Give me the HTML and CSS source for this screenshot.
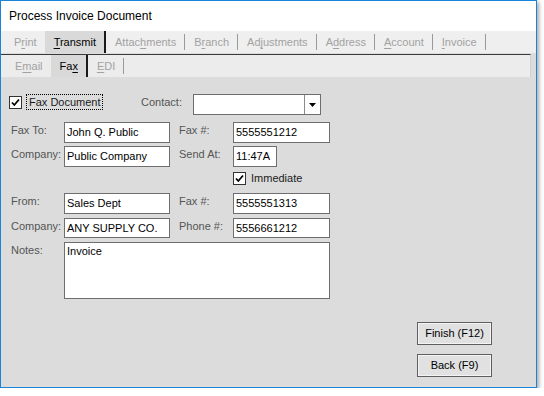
FILE: index.html
```html
<!DOCTYPE html>
<html>
<head>
<meta charset="utf-8">
<link rel="stylesheet" href="styles.css">
</head>
<body>
<div class="window">
  <div class="titlebar">Process Invoice Document</div>
  <div class="tabs tabs-main">
    <span class="tab first">P<u>r</u>int</span>
    <span class="tab active"><u>T</u>ransmit</span><span class="sep dark"></span>
    <span class="tab">Attac<u>h</u>ments</span><span class="sep"></span>
    <span class="tab">B<u>r</u>anch</span><span class="sep"></span>
    <span class="tab">Ad<u>j</u>ustments</span><span class="sep"></span>
    <span class="tab">A<u>d</u>dress</span><span class="sep"></span>
    <span class="tab"><u>A</u>ccount</span><span class="sep"></span>
    <span class="tab"><u>I</u>nvoice</span><span class="sep"></span>
  </div>
  <div class="tabs tabs-sub">
    <span class="tab first">E<u>m</u>ail</span>
    <span class="tab active">Fa<u>x</u></span><span class="sep dark"></span>
    <span class="tab"><u>E</u>DI</span><span class="sep"></span>
  </div>
  <div class="panel">
    <div class="row row1">
      <span class="check"><svg width="11" height="11" viewBox="0 0 11 11"><path d="M2 5.5 L4.3 8 L9 2.5" fill="none" stroke="#000" stroke-width="1.8"/></svg></span>
      <span class="focus-label">Fax Document</span>
      <span class="lbl contact">Contact:</span>
      <span class="combo"><span class="combo-btn"><svg width="7" height="4" viewBox="0 0 7 4"><path d="M0 0 H7 L3.5 4 Z" fill="#000"/></svg></span></span>
    </div>
    <div class="row row2">
      <span class="lbl c1">Fax To:</span>
      <span class="input w1">John Q. Public</span>
      <span class="lbl c2">Fax #:</span>
      <span class="input w2">5555551212</span>
    </div>
    <div class="row row3">
      <span class="lbl c1">Company:</span>
      <span class="input w1">Public Company</span>
      <span class="lbl c2">Send At:</span>
      <span class="input w3">11:47A</span>
    </div>
    <div class="row row4">
      <span class="check"><svg width="11" height="11" viewBox="0 0 11 11"><path d="M2 5.5 L4.3 8 L9 2.5" fill="none" stroke="#000" stroke-width="1.8"/></svg></span>
      <span class="chk-label">Immediate</span>
    </div>
    <div class="row row5">
      <span class="lbl c1">From:</span>
      <span class="input w1">Sales Dept</span>
      <span class="lbl c2">Fax #:</span>
      <span class="input w2">5555551313</span>
    </div>
    <div class="row row6">
      <span class="lbl c1">Company:</span>
      <span class="input w1">ANY SUPPLY CO.</span>
      <span class="lbl c2">Phone #:</span>
      <span class="input w2">5556661212</span>
    </div>
    <div class="row row7">
      <span class="lbl c1">Notes:</span>
      <span class="input notes">Invoice</span>
    </div>
    <div class="buttons">
      <span class="btn">Finish (F12)</span>
      <span class="btn">Back (F9)</span>
    </div>
  </div>
</div>
</body>
</html>
```
FILE: styles.css
```css
html, body {
  margin: 0;
  padding: 0;
  background: #ffffff;
}
body {
  font-family: "Liberation Sans", Arial, sans-serif;
  font-size: 11px;
}
.window {
  width: 535px;
  height: 386px;
  border: 1px solid #1a84d8;
  box-shadow: 2px 2px 4px rgba(0,0,0,0.35);
  background: #dcdcdc;
  display: flex;
  flex-direction: column;
  box-sizing: content-box;
}
.titlebar {
  height: 30px;
  background: #ffffff;
  font-size: 12px;
  line-height: 30px;
  padding-left: 8px;
  color: #000;
}
.tabs {
  display: flex;
  align-items: center;
  height: 22px;
  line-height: 22px;
  background: #efefef;
  color: #a2a2a2;
}
.tabs-main {
  padding-left: 4px;
}
.tabs-sub {
  margin-top: 1px;
  border-top: 1px solid #3a3a3a;
  padding-left: 5px;
  margin-right: 5px;
  background: #ececec;
  border-right: 1px solid #cfcfcf;
}
.tab {
  padding: 0 8px 0 9px;
  height: 22px;
}
.tab.active {
  background: #d9d9d9;
  color: #000;
}
.tab u {
  text-decoration-thickness: 1px;
  text-underline-offset: 2px;
}
.sep {
  width: 1px;
  height: 16px;
  background: #9a9a9a;
}
.sep.dark {
  height: 22px;
  background: #1a1a1a;
  width: 2px;
}
.panel {
  flex: 1;
  padding: 17px 0 0 10px;
  display: flex;
  flex-direction: column;
}
.row {
  display: flex;
  align-items: flex-start;
  height: 21px;
}
.row1 { margin-left: -2px; }
.row2 { margin-top: 7px; }
.row3 { margin-top: 3px; }
.row4 { margin-top: 4px; height: 14px; margin-left: 222px; align-items: center; }
.row5 { margin-top: 8px; }
.row6 { margin-top: 4px; height: 20px; }
.row7 { margin-top: 4px; height: 57px; }
.check {
  width: 11px;
  height: 11px;
  border: 1px solid #333;
  background: #fff;
  display: inline-flex;
  flex: none;
}
.row1 .check { margin-top: 2px; }
.focus-label {
  margin-left: 4px;
  width: 73px;
  height: 14px;
  line-height: 14px;
  border: 1px dotted #000;
  padding-left: 2px;
  color: #1a1a1a;
  box-sizing: content-box;
}
.chk-label {
  margin-left: 5px;
  color: #1a1a1a;
}
.lbl {
  color: #555;
  padding-top: 2px;
  line-height: 13px;
}
.contact { margin-left: 38px; width: 52px; }
.combo {
  width: 126px;
  height: 19px;
  border: 1px solid #6e6e6e;
  background: #fff;
  display: flex;
  justify-content: flex-end;
}
.combo-btn {
  width: 15px;
  height: 19px;
  border-left: 1px solid #8a8a8a;
  display: flex;
  align-items: center;
  justify-content: center;
}
.c1 { width: 53px; }
.c2 { width: 54px; margin-left: 9px; }
.input {
  height: 100%;
  box-sizing: border-box;
  border: 1px solid #6f6f6f;
  background: #fff;
  color: #000;
  padding: 3px 0 0 2px;
  line-height: 13px;
}
.w1 { width: 106px; }
.w2 { width: 97px; }
.w3 { width: 44px; }
.notes { width: 266px; padding-top: 2px; }
.buttons {
  display: flex;
  flex-direction: column;
  gap: 9px;
  margin: 23px 0 0 406px;
}
.btn {
  width: 75px;
  height: 23px;
  box-sizing: border-box;
  border: 1px solid #5f5f5f;
  box-shadow: inset 0 0 0 1px #f4f4f4;
  background: #e1e1e1;
  color: #000;
  text-align: center;
  line-height: 21px;
}
```
